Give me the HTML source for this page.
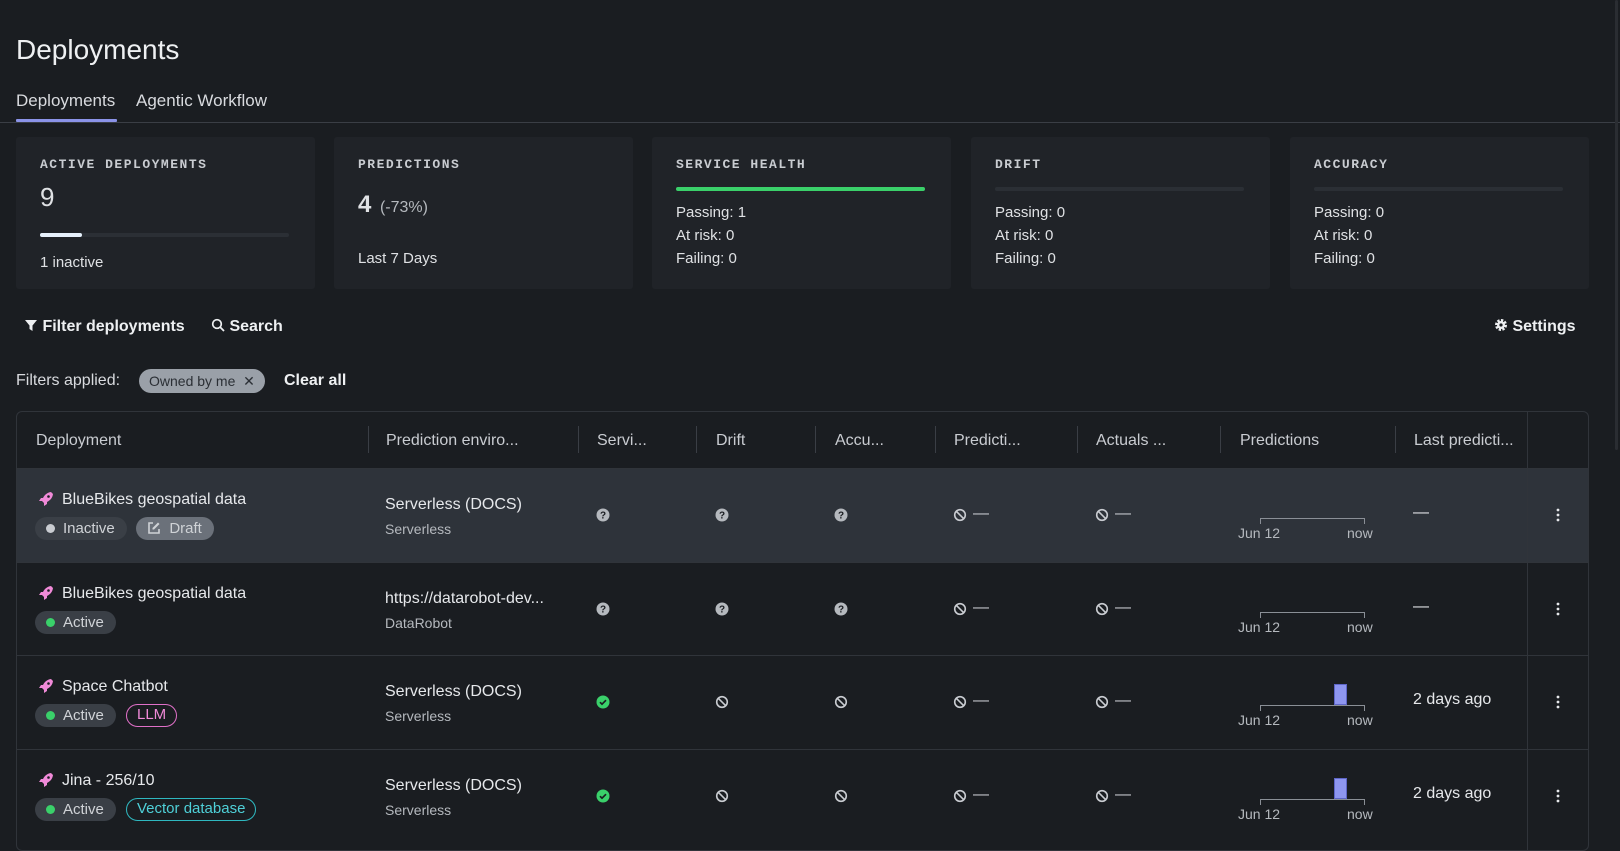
<!DOCTYPE html>
<html><head><meta charset="utf-8"><style>
*{box-sizing:border-box;margin:0;padding:0}
body{width:1620px;height:836px;overflow:hidden;background:#1a1d21;font-family:"Liberation Sans",sans-serif;color:#e6e8eb;position:relative}
.abs{position:absolute;white-space:nowrap}
h1{position:absolute;left:16px;top:34px;font-size:28px;font-weight:400;color:#eef0f2}
.tab{position:absolute;top:91px;font-size:17px;color:#d8dade}
.card{position:absolute;top:137px;width:299px;height:152px;background:#202328;border-radius:3px}
.lbl{position:absolute;left:24px;top:20px;font-family:"Liberation Mono",monospace;font-size:13px;font-weight:700;letter-spacing:1.5px;color:#c9ccd1}
.ct{position:absolute;left:24px;font-size:15px;color:#dfe1e4;line-height:23px}
.bar{position:absolute;left:24px;top:50px;width:249px;height:4px;border-radius:2px;background:#2b2f35}
.tbl{position:absolute;left:16px;top:411px;width:1573px;height:440px;border:1px solid #30343a;border-radius:6px;overflow:hidden}
.th{position:absolute;top:20px;font-size:16px;color:#c9ccd1}
.sep{position:absolute;top:14px;width:1px;height:27px;background:#3a3e45}
.row{position:absolute;left:0;width:1573px;height:94px;border-top:1px solid #30343a}
.nm{position:absolute;left:46px;top:24px;font-size:16px;color:#e6e8eb}
.pill{position:absolute;top:50px;height:23px;border-radius:12px;font-size:15px;line-height:23px;padding:0 12px 0 11px;color:#d0d3d7;background:#3a3f46}
.dot{display:inline-block;width:9px;height:9px;border-radius:50%;margin-right:8px;vertical-align:0px}
.env{position:absolute;left:369px;top:29px;font-size:16px;color:#e6e8eb}
.env2{position:absolute;left:369px;top:54px;font-size:14px;color:#b5b9be}
.ic{position:absolute;top:41px}
.dash{position:absolute;top:38px;font-size:16px;color:#c9ccd1}
.chart{position:absolute;left:1241px;top:44px;width:106px;height:40px}
.last{position:absolute;left:1397px;top:37px;font-size:16px;color:#e6e8eb}
.kebab{position:absolute;left:1540px;top:41px}
.sticky{position:absolute;left:1510px;top:0;width:1px;height:440px;background:#30343a}
</style></head><body>
<h1>Deployments</h1>
<div class="tab" style="left:16px">Deployments</div>
<div class="tab" style="left:136px">Agentic Workflow</div>
<div class="abs" style="left:0;top:122px;width:1620px;height:1px;background:#3a3e45"></div>
<div class="abs" style="left:16px;top:119px;width:101px;height:3px;background:#8b93e8;border-radius:1px"></div>
<div class="abs" style="left:1615px;top:0;width:3px;height:450px;background:#2a2d32;border-radius:2px"></div>

<div class="card" style="left:16px"><div class="lbl">ACTIVE DEPLOYMENTS</div>
<div class="ct" style="top:45px;font-size:26px;line-height:30px">9</div>
<div class="bar" style="top:96px"><div style="width:42px;height:4px;border-radius:2px;background:#e6f0fb"></div></div>
<div class="ct" style="top:114px">1 inactive</div></div>
<div class="card" style="left:334px"><div class="lbl">PREDICTIONS</div>
<div class="ct" style="top:56px"><span style="font-size:24px;font-weight:700">4</span> <span style="color:#b5b9be;font-size:16px">&nbsp;(-73%)</span></div>
<div class="ct" style="top:110px">Last 7 Days</div></div>
<div class="card" style="left:652px"><div class="lbl">SERVICE HEALTH</div>
<div class="bar" style="background:#3ad06a"></div>
<div class="ct" style="top:64px">Passing: 1<br>At risk: 0<br>Failing: 0</div></div>
<div class="card" style="left:971px"><div class="lbl">DRIFT</div>
<div class="bar"></div>
<div class="ct" style="top:64px">Passing: 0<br>At risk: 0<br>Failing: 0</div></div>
<div class="card" style="left:1290px"><div class="lbl">ACCURACY</div>
<div class="bar"></div>
<div class="ct" style="top:64px">Passing: 0<br>At risk: 0<br>Failing: 0</div></div>

<div class="abs" style="left:24px;top:318px;font-size:16px;font-weight:700;color:#eef0f2"><svg width="14" height="14" viewBox="0 0 14 14" style="vertical-align:-1px"><path d="M1 2h12L8.5 7.5V13L5.5 11V7.5z" fill="#eef0f2"/></svg> Filter deployments</div>
<div class="abs" style="left:211px;top:318px;font-size:16px;font-weight:700;color:#eef0f2"><svg width="14" height="14" viewBox="0 0 14 14" style="vertical-align:-1px"><circle cx="6" cy="6" r="4.3" fill="none" stroke="#eef0f2" stroke-width="1.7"/><path d="M9 9l4 4" stroke="#eef0f2" stroke-width="1.8"/></svg> Search</div>
<div class="abs" style="left:1494px;top:318px;font-size:16px;font-weight:700;color:#eef0f2"><svg width="14" height="14" viewBox="0 0 14 14" style="vertical-align:-1px"><circle cx="7" cy="7" r="4.5" fill="none" stroke="#eef0f2" stroke-width="3" stroke-dasharray="2.2 1.3"/><circle cx="7" cy="7" r="4" fill="#eef0f2"/><circle cx="7" cy="7" r="1.6" fill="#1a1d21"/></svg> Settings</div>

<div class="abs" style="left:16px;top:372px;font-size:16px;color:#d8dade">Filters applied:</div>
<div class="abs" style="left:139px;top:369px;height:24px;padding:0 10px;border-radius:12px;background:#9aa0a8;color:#2b2f35;font-size:14px;line-height:24px">Owned by me &nbsp;✕</div>
<div class="abs" style="left:284px;top:372px;font-size:16px;font-weight:700;color:#eef0f2">Clear all</div>

<div class="tbl">
<div class="th" style="left:19px">Deployment</div><div class="sep" style="left:351px"></div>
<div class="th" style="left:369px">Prediction enviro...</div><div class="sep" style="left:561px"></div>
<div class="th" style="left:580px">Servi...</div><div class="sep" style="left:679px"></div>
<div class="th" style="left:699px">Drift</div><div class="sep" style="left:798px"></div>
<div class="th" style="left:818px">Accu...</div><div class="sep" style="left:918px"></div>
<div class="th" style="left:937px">Predicti...</div><div class="sep" style="left:1060px"></div>
<div class="th" style="left:1079px">Actuals ...</div><div class="sep" style="left:1203px"></div>
<div class="th" style="left:1223px">Predictions</div><div class="sep" style="left:1378px"></div>
<div class="th" style="left:1397px">Last predicti...</div>

<div class="row" style="top:56px;background:#2e333a"></div>
<div class="row" style="top:150px"></div>
<div class="row" style="top:243px"></div>
<div class="row" style="top:337px"></div>
<div class="sticky"></div>
</div>

<svg width="0" height="0" style="position:absolute"><defs>
<g id="rk"><path d="M13 1C9 1.5 6.5 4 5 7L3 7 1 10l3 0 2 2 0 3 3-2 0-2C12 9.5 14.5 7 15 3z" fill="#f08ad8"/><circle cx="10.5" cy="5.5" r="1.3" fill="#1a1d21"/></g>
<g id="q"><circle cx="7" cy="7" r="6.5" fill="#b5b9be"/><text x="7" y="10.5" font-size="10" font-weight="700" text-anchor="middle" fill="#1a1d21" font-family="Liberation Sans">?</text></g>
<g id="ok"><circle cx="7" cy="7" r="6.5" fill="#3ad06a"/><path d="M4 7.2l2 2 4-4" stroke="#1a1d21" stroke-width="1.7" fill="none"/></g>
<g id="no"><circle cx="7" cy="7" r="5.3" fill="none" stroke="#c9ccd1" stroke-width="1.6"/><path d="M3.3 3.3l7.4 7.4" stroke="#c9ccd1" stroke-width="1.6"/></g>
<g id="kb"><circle cx="2" cy="2" r="1.4" fill="#e6e8eb"/><circle cx="2" cy="7" r="1.4" fill="#e6e8eb"/><circle cx="2" cy="12" r="1.4" fill="#e6e8eb"/></g>
</defs></svg>

<div id="rows" style="position:absolute;left:16px;top:411px;width:1573px;height:425px;overflow:hidden">
<div style="position:absolute;left:0;top:56px;width:1573px;height:94px">
<svg class="ic" style="left:22px;top:24px" width="16" height="16"><use href="#rk"/></svg>
<div class="nm">BlueBikes geospatial data</div>
<div class="pill" style="left:19px"><span class="dot" style="background:#c9ccd1"></span>Inactive</div>
<div class="pill" style="left:120px;background:#6b717a;color:#cfd2d6"><svg width="14" height="14" viewBox="0 0 14 14" style="vertical-align:-2px"><path d="M6 2H2v10h10V8" stroke="#cfd2d6" stroke-width="1.6" fill="none"/><path d="M11 1.5l1.5 1.5L7 8.5H5.5V7z" fill="#cfd2d6"/></svg>&nbsp; Draft</div>
<div class="env">Serverless (DOCS)</div><div class="env2">Serverless</div>
<svg class="ic" style="left:580px" width="14" height="14"><use href="#q"/></svg>
<svg class="ic" style="left:699px" width="14" height="14"><use href="#q"/></svg>
<svg class="ic" style="left:818px" width="14" height="14"><use href="#q"/></svg>
<svg class="ic" style="left:937px" width="14" height="14"><use href="#no"/></svg><div class="dash" style="left:957px">—</div>
<svg class="ic" style="left:1079px" width="14" height="14"><use href="#no"/></svg><div class="dash" style="left:1099px">—</div>
<div class="chart"><svg width="140" height="40" style="position:absolute;left:-20px;top:0"><path d="M23.5 13V7.5h104V13" stroke="#8a8f96" fill="none"/></svg><div class="abs" style="left:-19px;top:14px;font-size:14px;color:#b5b9be">Jun 12</div><div class="abs" style="left:90px;top:14px;font-size:14px;color:#b5b9be">now</div></div>
<div class="last">—</div>
<svg class="kebab" width="4" height="14"><use href="#kb"/></svg>
</div>
<div style="position:absolute;left:0;top:150px;width:1573px;height:94px">
<svg class="ic" style="left:22px;top:24px" width="16" height="16"><use href="#rk"/></svg>
<div class="nm">BlueBikes geospatial data</div>
<div class="pill" style="left:19px"><span class="dot" style="background:#3ad06a"></span>Active</div>
<div class="env">https://datarobot-dev...</div><div class="env2">DataRobot</div>
<svg class="ic" style="left:580px" width="14" height="14"><use href="#q"/></svg>
<svg class="ic" style="left:699px" width="14" height="14"><use href="#q"/></svg>
<svg class="ic" style="left:818px" width="14" height="14"><use href="#q"/></svg>
<svg class="ic" style="left:937px" width="14" height="14"><use href="#no"/></svg><div class="dash" style="left:957px">—</div>
<svg class="ic" style="left:1079px" width="14" height="14"><use href="#no"/></svg><div class="dash" style="left:1099px">—</div>
<div class="chart"><svg width="140" height="40" style="position:absolute;left:-20px;top:0"><path d="M23.5 13V7.5h104V13" stroke="#8a8f96" fill="none"/></svg><div class="abs" style="left:-19px;top:14px;font-size:14px;color:#b5b9be">Jun 12</div><div class="abs" style="left:90px;top:14px;font-size:14px;color:#b5b9be">now</div></div>
<div class="last">—</div>
<svg class="kebab" width="4" height="14"><use href="#kb"/></svg>
</div>
<div style="position:absolute;left:0;top:243px;width:1573px;height:94px">
<svg class="ic" style="left:22px;top:24px" width="16" height="16"><use href="#rk"/></svg>
<div class="nm">Space Chatbot</div>
<div class="pill" style="left:19px"><span class="dot" style="background:#3ad06a"></span>Active</div>
<div class="pill" style="left:110px;background:transparent;border:1.5px solid #e070c8;color:#f08ad8;line-height:20px;padding:0 10px">LLM</div>
<div class="env">Serverless (DOCS)</div><div class="env2">Serverless</div>
<svg class="ic" style="left:580px" width="14" height="14"><use href="#ok"/></svg>
<svg class="ic" style="left:699px" width="14" height="14"><use href="#no"/></svg>
<svg class="ic" style="left:818px" width="14" height="14"><use href="#no"/></svg>
<svg class="ic" style="left:937px" width="14" height="14"><use href="#no"/></svg><div class="dash" style="left:957px">—</div>
<svg class="ic" style="left:1079px" width="14" height="14"><use href="#no"/></svg><div class="dash" style="left:1099px">—</div>
<div class="chart"><div class="abs" style="left:77px;top:-14px;width:13px;height:21px;background:#8e96f0;border:1px solid #5e66c8"></div><svg width="140" height="40" style="position:absolute;left:-20px;top:0"><path d="M23.5 13V7.5h104V13" stroke="#8a8f96" fill="none"/></svg><div class="abs" style="left:-19px;top:14px;font-size:14px;color:#b5b9be">Jun 12</div><div class="abs" style="left:90px;top:14px;font-size:14px;color:#b5b9be">now</div></div>
<div class="last">2 days ago</div>
<svg class="kebab" width="4" height="14"><use href="#kb"/></svg>
</div>
<div style="position:absolute;left:0;top:337px;width:1573px;height:94px">
<svg class="ic" style="left:22px;top:24px" width="16" height="16"><use href="#rk"/></svg>
<div class="nm">Jina - 256/10</div>
<div class="pill" style="left:19px"><span class="dot" style="background:#3ad06a"></span>Active</div>
<div class="pill" style="left:110px;background:transparent;border:1.5px solid #2fb8c0;color:#4fd0d8;line-height:20px;padding:0 10px">Vector database</div>
<div class="env">Serverless (DOCS)</div><div class="env2">Serverless</div>
<svg class="ic" style="left:580px" width="14" height="14"><use href="#ok"/></svg>
<svg class="ic" style="left:699px" width="14" height="14"><use href="#no"/></svg>
<svg class="ic" style="left:818px" width="14" height="14"><use href="#no"/></svg>
<svg class="ic" style="left:937px" width="14" height="14"><use href="#no"/></svg><div class="dash" style="left:957px">—</div>
<svg class="ic" style="left:1079px" width="14" height="14"><use href="#no"/></svg><div class="dash" style="left:1099px">—</div>
<div class="chart"><div class="abs" style="left:77px;top:-14px;width:13px;height:21px;background:#8e96f0;border:1px solid #5e66c8"></div><svg width="140" height="40" style="position:absolute;left:-20px;top:0"><path d="M23.5 13V7.5h104V13" stroke="#8a8f96" fill="none"/></svg><div class="abs" style="left:-19px;top:14px;font-size:14px;color:#b5b9be">Jun 12</div><div class="abs" style="left:90px;top:14px;font-size:14px;color:#b5b9be">now</div></div>
<div class="last">2 days ago</div>
<svg class="kebab" width="4" height="14"><use href="#kb"/></svg>
</div>
</div>
</body></html>
